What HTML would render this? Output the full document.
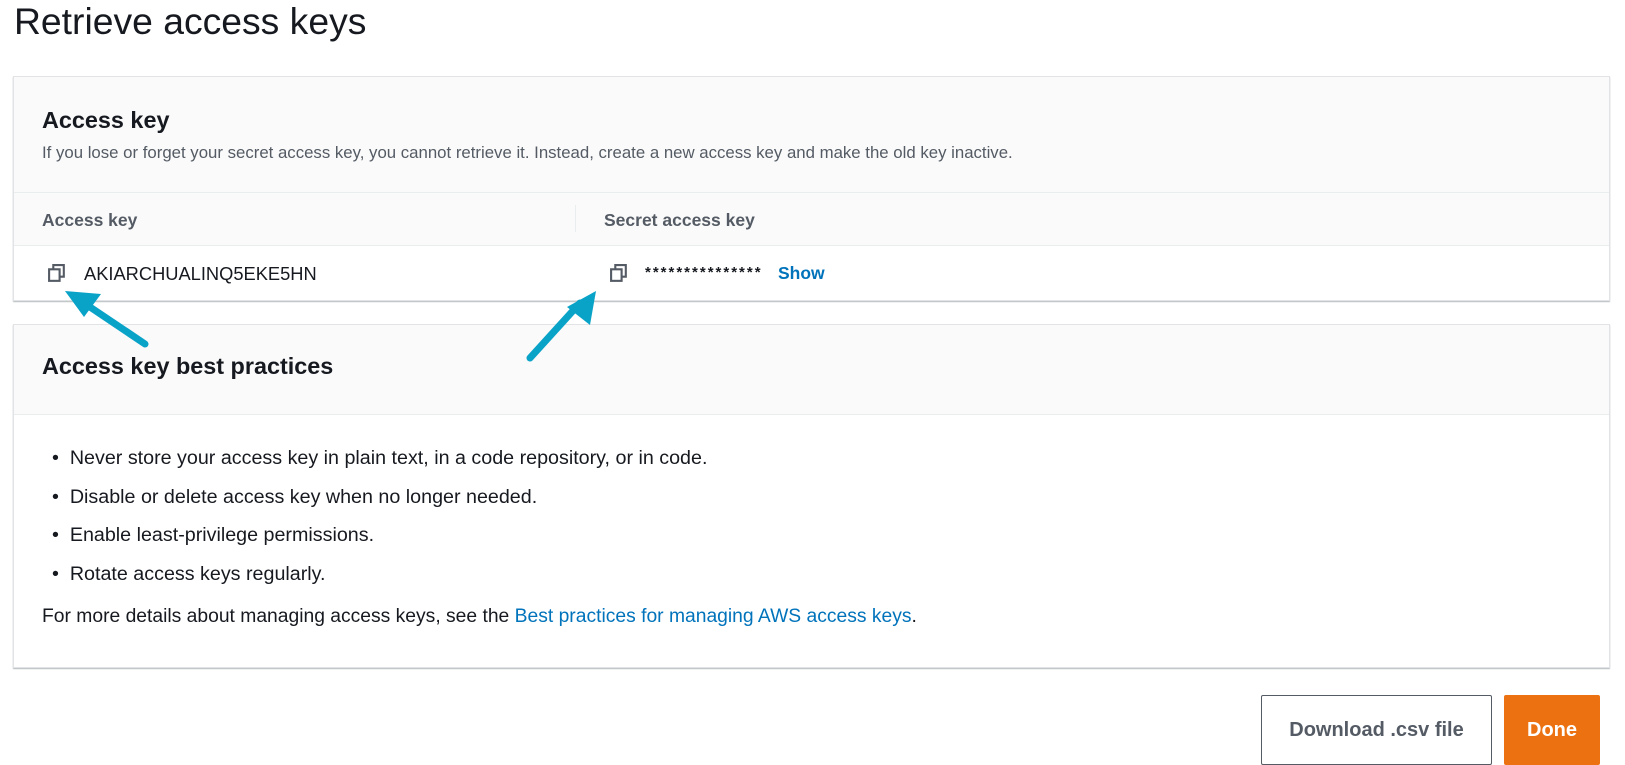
<!DOCTYPE html>
<html><head><meta charset="utf-8"><style>
*{box-sizing:border-box;margin:0;padding:0}
body{width:1625px;height:751px;background:#fff;font-family:"Liberation Sans",sans-serif;color:#16191f;position:relative;overflow:hidden}
.abs{position:absolute;white-space:nowrap}
.card{position:absolute;left:13px;width:1597px;border:1px solid #e1e3e6;box-shadow:0 1px 1px rgba(0,28,36,.3);background:#fff}
.gray{background:#fafafa}
a{color:#0073bb;text-decoration:none}
</style></head><body>
<div class="abs" style="left:14px;top:0px;font-size:37.3px;color:#16191f">Retrieve access keys</div>

<div class="card" style="top:76px;height:225px">
 <div class="gray" style="height:116px;border-bottom:1px solid #eaeded"></div>
 <div class="gray" style="height:53px;border-bottom:1px solid #eaeded"></div>
</div>
<div class="abs" style="left:42px;top:107px;font-size:23.4px;font-weight:bold">Access key</div>
<div class="abs" style="left:42px;top:143px;font-size:16.8px;color:#545b64">If you lose or forget your secret access key, you cannot retrieve it. Instead, create a new access key and make the old key inactive.</div>
<div class="abs" style="left:42px;top:210px;font-size:17.5px;font-weight:bold;color:#545b64">Access key</div>
<div class="abs" style="left:575px;top:205px;width:1px;height:27px;background:#eaeded"></div>
<div class="abs" style="left:604px;top:210px;font-size:17.5px;font-weight:bold;color:#545b64">Secret access key</div>

<svg class="abs" style="left:47px;top:263px" width="21" height="21" viewBox="0 0 20 20" fill="none" stroke="#545b64" stroke-width="2"><rect x="2" y="6" width="10" height="11"/><path d="M6 6V2h10v11h-4"/></svg>
<div class="abs" style="left:84px;top:263px;font-size:18.3px">AKIARCHUALINQ5EKE5HN</div>
<svg class="abs" style="left:609px;top:263px" width="21" height="21" viewBox="0 0 20 20" fill="none" stroke="#545b64" stroke-width="2"><rect x="2" y="6" width="10" height="11"/><path d="M6 6V2h10v11h-4"/></svg>
<div class="abs" style="left:645px;top:264px;font-size:15px;font-weight:bold;letter-spacing:2px">***************</div>
<div class="abs" style="left:778px;top:263px;font-size:17.5px;font-weight:bold;color:#0073bb">Show</div>

<div class="card" style="top:324px;height:344px">
 <div class="gray" style="height:90px;border-bottom:1px solid #eaeded"></div>
</div>
<div class="abs" style="left:42px;top:353px;font-size:23.4px;font-weight:bold">Access key best practices</div>
<div class="abs" style="left:52px;top:439px;font-size:19.7px;line-height:38.7px">
• &nbsp;Never store your access key in plain text, in a code repository, or in code.<br>
• &nbsp;Disable or delete access key when no longer needed.<br>
• &nbsp;Enable least-privilege permissions.<br>
• &nbsp;Rotate access keys regularly.</div>
<div class="abs" style="left:42px;top:606px;font-size:19.3px">For more details about managing access keys, see the <a>Best practices for managing AWS access keys</a>.</div>

<svg class="abs" style="left:0;top:0" width="1625" height="751">
 <g stroke="#0aa3c8" stroke-width="7" stroke-linecap="round">
  <line x1="145" y1="344" x2="84" y2="303"/>
  <line x1="530" y1="358" x2="580" y2="303"/>
 </g>
 <polygon points="65,291 101,294 84,317" fill="#0aa3c8"/>
 <polygon points="596,291 590,325 567,307" fill="#0aa3c8"/>
</svg>

<div class="abs" style="left:1261px;top:695px;width:231px;height:70px;border:1px solid #545b64;border-radius:2px;font-size:20px;font-weight:bold;color:#545b64;text-align:center;line-height:68px">Download .csv file</div>
<div class="abs" style="left:1504px;top:695px;width:96px;height:70px;background:#ec7211;border-radius:2px;font-size:20px;font-weight:bold;color:#fff;text-align:center;line-height:70px">Done</div>
</body></html>
